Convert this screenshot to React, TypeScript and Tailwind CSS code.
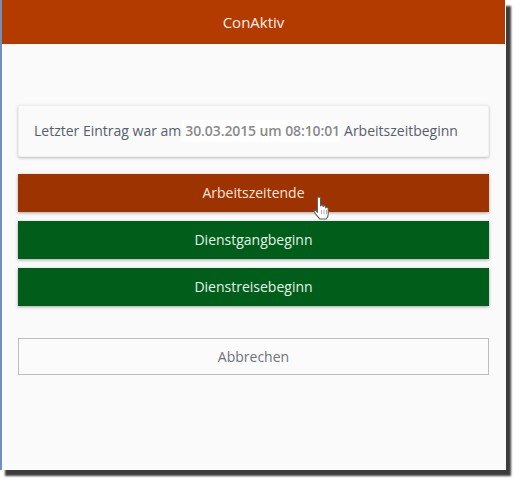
import React from 'react';

const HandCursor = () => (
  <svg
    className="absolute left-[312px] top-[196px]"
    width="22"
    height="26"
    viewBox="0 0 20 25"
    fill="none"
  >
    <path
      d="M4.6 2.2c0-1.7 3-1.7 3 0v7.3c.2-1.3 2.4-1.3 2.5.2v.6c.2-1.2 2.3-1.2 2.4.3v.8c.3-1 2.4-.9 2.5.5v5.6c0 2.4-1 3.3-2 4.7H6.8c-1-1.6-2.3-2.8-3.8-4.8-1-1.4-2.2-2.6-1.4-3.5.8-.8 1.8.1 3 1.8V2.2z"
      fill="#ffffff"
      stroke="#5a5a5a"
      strokeWidth="1"
      strokeLinejoin="round"
    />
    <path d="M8.6 13.5v4M11 13.5v4M13.4 13.5v4" stroke="#9a9a9a" strokeWidth="0.8" />
  </svg>
);

const ACTIONS = [
  { label: 'Arbeitszeitende', className: 'bg-[#9c3300] text-[#fbe6dc]' },
  { label: 'Dienstgangbeginn', className: 'bg-[#005e1a] text-[#e3f3e6]' },
  { label: 'Dienstreisebeginn', className: 'bg-[#005e1a] text-[#e3f3e6]' },
];

export default function App() {
  return (
    <div className="relative h-[480px] w-[516px] overflow-hidden bg-white font-['Open_Sans',sans-serif]">
      <div className="flex h-[470px] w-[506px] flex-col border-l-2 border-[#7391b8] bg-[#fafafa] shadow-[5px_6px_2px_#3c3c3c]">
        <header className="mr-px flex h-11 items-center justify-center bg-[#b33b00] text-[15px] text-[#fdf1ea]">
          ConAktiv
        </header>

        <main className="flex flex-col pl-4 pr-[17px] pt-[61px]">
          <div className="flex h-[52px] items-center rounded-[2px] border border-[#efefef] bg-[#fafafa] pl-[15px] text-sm whitespace-nowrap text-[#55606e] shadow-[0_1px_3px_rgba(0,0,0,0.25)]">
            Letzter Eintrag war am
            <span className="ml-px mr-[4px] bg-white py-[1px] pl-[3px] font-semibold tracking-[-0.1px] text-[#8a8a8a]">
              30.03.2015 um 08:10:01
            </span>
            Arbeitszeitbeginn
          </div>

          <div className="mt-[17px] flex flex-col gap-[9px]">
            {ACTIONS.map((action) => (
              <button
                key={action.label}
                className={`h-[38px] text-sm shadow-[0_1px_3px_rgba(0,0,0,0.35)] ${action.className}`}
              >
                {action.label}
              </button>
            ))}
          </div>

          <button className="mt-8 h-[37px] border border-[#bdbdbd] bg-[#fbfbfb] text-sm text-[#6f7278]">
            Abbrechen
          </button>
        </main>
      </div>
      <HandCursor />
    </div>
  );
}
